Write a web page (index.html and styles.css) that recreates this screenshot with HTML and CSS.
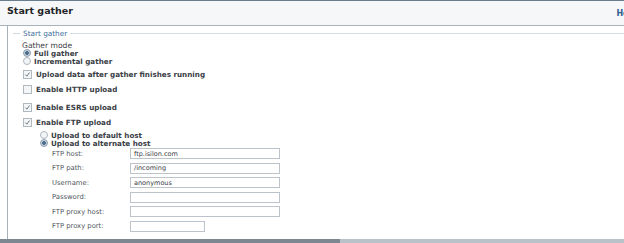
FILE: index.html
```html
<!DOCTYPE html>
<html>
<head>
<meta charset="utf-8">
<link rel="stylesheet" href="styles.css">
</head>
<body>
<div class="page">
  <div class="topline"></div>
  <div class="header">
    <div class="title">Start gather</div>
    <a class="help" href="#">Help</a>
  </div>
  <div class="content">
    <div class="fs-head">
      <span class="fs-dash"></span>
      <span class="legend">Start gather</span>
      <span class="fs-line"></span>
    </div>
    <div class="rows">
      <div class="row r-mode"><span class="plain">Gather mode</span></div>
      <div class="row r-full"><span class="radio on"></span><span class="lbl">Full gather</span></div>
      <div class="row r-incr"><span class="radio"></span><span class="lbl">Incremental gather</span></div>
      <div class="row r-upload"><span class="check on"><svg viewBox="0 0 8 8"><path d="M1.6 4.2 L3.2 5.9 L6.4 1.8"/></svg></span><span class="lbl">Upload data after gather finishes running</span></div>
      <div class="row r-http"><span class="check"></span><span class="lbl">Enable HTTP upload</span></div>
      <div class="row r-esrs"><span class="check on"><svg viewBox="0 0 8 8"><path d="M1.6 4.2 L3.2 5.9 L6.4 1.8"/></svg></span><span class="lbl">Enable ESRS upload</span></div>
      <div class="row r-ftp"><span class="check on"><svg viewBox="0 0 8 8"><path d="M1.6 4.2 L3.2 5.9 L6.4 1.8"/></svg></span><span class="lbl">Enable FTP upload</span></div>
      <div class="sub">
        <div class="row r-def"><span class="radio"></span><span class="lbl">Upload to default host</span></div>
        <div class="row r-alt"><span class="radio on"></span><span class="lbl">Upload to alternate host</span></div>
        <div class="fields">
          <div class="field f-first"><span class="flabel">FTP host:</span><span class="input">ftp.isilon.com</span></div>
          <div class="field"><span class="flabel">FTP path:</span><span class="input">/incoming</span></div>
          <div class="field"><span class="flabel">Username:</span><span class="input">anonymous</span></div>
          <div class="field"><span class="flabel">Password:</span><span class="input"></span></div>
          <div class="field"><span class="flabel">FTP proxy host:</span><span class="input"></span></div>
          <div class="field"><span class="flabel">FTP proxy port:</span><span class="input short"></span></div>
        </div>
      </div>
    </div>
  </div>
  <div class="hscroll"><div class="thumb"></div></div>
</div>
</body>
</html>
```

FILE: styles.css
```css
html, body {
  margin: 0;
  padding: 0;
  background: #ffffff;
  overflow: hidden;
}
.page {
  width: 624px;
  height: 243px;
  display: flex;
  flex-direction: column;
  font-family: "DejaVu Sans", Verdana, sans-serif;
  color: #333a40;
  overflow: hidden;
}
.topline {
  height: 1px;
  background: #6a7d8c;
  flex: none;
}
.header {
  flex: none;
  background: #f6f7f9;
  border-bottom: 1px solid #aab2ba;
  display: flex;
  align-items: center;
  padding-left: 7px;
  box-sizing: border-box;
  height: 25px;
}
.title {
  font-size: 9.5px;
  font-weight: bold;
  color: #1f2428;
  margin-top: -5px;
}
.help {
  margin-left: auto;
  margin-right: -13px;
  font-size: 8px;
  font-weight: bold;
  color: #2d5f8e;
  text-decoration: none;
  flex: none;
  margin-top: 1px;
}
.content {
  flex: 1;
  margin-left: 7px;
  border-left: 1px solid #a9b1b9;
  display: flex;
  flex-direction: column;
  min-height: 0;
}
.fs-head {
  height: 14px;
  display: flex;
  align-items: center;
  flex: none;
}
.fs-dash {
  width: 7px;
  margin-left: 5px;
  height: 1px;
  background: #cfd6dc;
  margin-top: 1px;
}
.legend {
  font-size: 7.3px;
  color: #3f6f9c;
  padding: 0 3px;
}
.fs-line {
  flex: 1;
  height: 1px;
  background: #d6dce1;
  margin-top: 1px;
}
.rows {
  padding-left: 14px;
  display: flex;
  flex-direction: column;
}
.row {
  height: 8px;
  display: flex;
  align-items: center;
  font-size: 7.2px;
}
.r-mode { margin-top: 1px; }
.r-upload { margin-top: 5px; }
.r-http { margin-top: 7px; }
.r-esrs { margin-top: 10px; }
.r-ftp { margin-top: 7px; }
.plain {
  color: #3a4046;
  font-size: 7.6px;
}
.lbl {
  font-weight: bold;
  color: #3a4046;
  white-space: nowrap;
}
.radio {
  width: 6px;
  height: 6px;
  border-radius: 50%;
  border: 1px solid #aeb7c0;
  background: #f2f4f6;
  margin-left: 1px;
  margin-right: 3px;
  flex: none;
}
.radio.on {
  background: radial-gradient(circle, #4f6f8d 0 1.6px, #c9d5e0 2.2px);
  border-color: #8b9bab;
}
.check {
  width: 7px;
  height: 7px;
  border: 1px solid #b0b8c0;
  background: #f3f5f7;
  margin-left: 1px;
  margin-right: 4px;
  flex: none;
  display: flex;
}
.check svg {
  width: 7px;
  height: 7px;
}
.check path {
  fill: none;
  stroke: #5d6f80;
  stroke-width: 1.1;
}
.sub {
  padding-left: 17px;
  display: flex;
  flex-direction: column;
}
.r-def { margin-top: 5px; }
.fields {
  display: flex;
  flex-direction: column;
  padding-left: 13px;
}
.field {
  height: 11px;
  display: flex;
  align-items: center;
  margin-top: 3.6px;
}
.field.f-first { margin-top: 1px; }
.flabel {
  width: 78px;
  font-size: 6.8px;
  color: #50575e;
  flex: none;
}
.input {
  width: 150px;
  height: 11px;
  box-sizing: border-box;
  border: 1px solid #bcc3ca;
  background: #ffffff;
  font-size: 6.5px;
  color: #3a4046;
  padding-left: 3px;
  display: flex;
  align-items: center;
}
.input.short {
  width: 75px;
}
.hscroll {
  height: 4px;
  flex: none;
  background: #b9c1c9;
  display: flex;
}
.thumb {
  width: 340px;
  background: #7c8791;
}
```
